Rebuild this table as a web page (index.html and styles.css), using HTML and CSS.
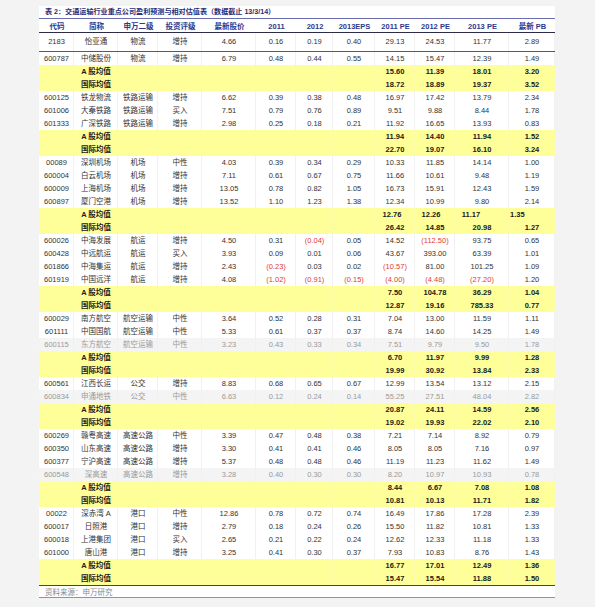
FILE: index.html
```html
<!DOCTYPE html>
<html lang="zh-CN">
<head>
<meta charset="utf-8">
<title>交通运输行业重点公司盈利预测与相对估值表</title>
<link rel="stylesheet" href="styles.css">
</head>
<body>
<div class="panel">
  <div class="title">表 2：交通运输行业重点公司盈利预测与相对估值表（数据截止 13/3/14）</div>
  <div class="grid head">
    <span>代码</span><span>简称</span><span>申万二级</span><span>投资评级</span><span>最新股价</span><span>2011</span><span>2012</span><span>2013EPS</span><span>2011 PE</span><span>2012 PE</span><span>2013 PE</span><span>最新 PB</span>
  </div>
  <div class="grid row first">
    <span>2183</span><span>怡亚通</span><span>物流</span><span>增持</span><span>4.66</span><span>0.16</span><span>0.19</span><span>0.40</span><span>29.13</span><span>24.53</span><span>11.77</span><span>2.89</span>
  </div>
  <div class="body">
    <div class="grid row"><span>600787</span><span>中储股份</span><span>物流</span><span>增持</span><span>6.79</span><span>0.48</span><span>0.44</span><span>0.55</span><span>14.15</span><span>15.47</span><span>12.39</span><span>1.49</span></div>
    <div class="grid avg"><span></span><span>A 股均值</span><span></span><span></span><span></span><span></span><span></span><span></span><span>15.60</span><span>11.39</span><span>18.01</span><span>3.20</span></div>
    <div class="grid avg"><span></span><span>国际均值</span><span></span><span></span><span></span><span></span><span></span><span></span><span>18.72</span><span>18.89</span><span>19.37</span><span>3.52</span></div>

    <div class="grid row"><span>600125</span><span>铁龙物流</span><span>铁路运输</span><span>增持</span><span>6.62</span><span>0.39</span><span>0.38</span><span>0.48</span><span>16.97</span><span>17.42</span><span>13.79</span><span>2.34</span></div>
    <div class="grid row"><span>601006</span><span>大秦铁路</span><span>铁路运输</span><span>买入</span><span>7.51</span><span>0.79</span><span>0.76</span><span>0.89</span><span>9.51</span><span>9.88</span><span>8.44</span><span>1.78</span></div>
    <div class="grid row"><span>601333</span><span>广深铁路</span><span>铁路运输</span><span>增持</span><span>2.98</span><span>0.25</span><span>0.18</span><span>0.21</span><span>11.92</span><span>16.65</span><span>13.93</span><span>0.83</span></div>
    <div class="grid avg"><span></span><span>A 股均值</span><span></span><span></span><span></span><span></span><span></span><span></span><span>11.94</span><span>14.40</span><span>11.94</span><span>1.52</span></div>
    <div class="grid avg"><span></span><span>国际均值</span><span></span><span></span><span></span><span></span><span></span><span></span><span>22.70</span><span>19.07</span><span>16.10</span><span>3.24</span></div>

    <div class="grid row"><span>00089</span><span>深圳机场</span><span>机场</span><span>中性</span><span>4.03</span><span>0.39</span><span>0.34</span><span>0.29</span><span>10.33</span><span>11.85</span><span>14.14</span><span>1.00</span></div>
    <div class="grid row"><span>600004</span><span>白云机场</span><span>机场</span><span>增持</span><span>7.11</span><span>0.61</span><span>0.67</span><span>0.75</span><span>11.66</span><span>10.61</span><span>9.48</span><span>1.19</span></div>
    <div class="grid row"><span>600009</span><span>上海机场</span><span>机场</span><span>增持</span><span>13.05</span><span>0.78</span><span>0.82</span><span>1.05</span><span>16.73</span><span>15.91</span><span>12.43</span><span>1.59</span></div>
    <div class="grid row"><span>600897</span><span>厦门空港</span><span>机场</span><span>增持</span><span>13.52</span><span>1.10</span><span>1.23</span><span>1.38</span><span>12.34</span><span>10.99</span><span>9.80</span><span>2.14</span></div>
    <div class="grid avg shifted"><span></span><span>A 股均值</span><span></span><span></span><span></span><span></span><span></span><span></span><span>12.76</span><span>12.26</span><span>11.17</span><span>1.35</span></div>
    <div class="grid avg"><span></span><span>国际均值</span><span></span><span></span><span></span><span></span><span></span><span></span><span>26.42</span><span>14.85</span><span>20.98</span><span>1.27</span></div>

    <div class="grid row"><span>600026</span><span>中海发展</span><span>航运</span><span>增持</span><span>4.50</span><span>0.31</span><span class="neg">(0.04)</span><span>0.05</span><span>14.52</span><span class="neg">(112.50)</span><span>93.75</span><span>0.65</span></div>
    <div class="grid row"><span>600428</span><span>中远航运</span><span>航运</span><span>买入</span><span>3.93</span><span>0.09</span><span>0.01</span><span>0.06</span><span>43.67</span><span>393.00</span><span>63.39</span><span>1.01</span></div>
    <div class="grid row"><span>601866</span><span>中海集运</span><span>航运</span><span>增持</span><span>2.43</span><span class="neg">(0.23)</span><span>0.03</span><span>0.02</span><span class="neg">(10.57)</span><span>81.00</span><span>101.25</span><span>1.09</span></div>
    <div class="grid row"><span>601919</span><span>中国远洋</span><span>航运</span><span>增持</span><span>4.08</span><span class="neg">(1.02)</span><span class="neg">(0.91)</span><span class="neg">(0.15)</span><span class="neg">(4.00)</span><span class="neg">(4.48)</span><span class="neg">(27.20)</span><span>1.20</span></div>
    <div class="grid avg"><span></span><span>A 股均值</span><span></span><span></span><span></span><span></span><span></span><span></span><span>7.50</span><span>104.78</span><span>36.29</span><span>1.04</span></div>
    <div class="grid avg"><span></span><span>国际均值</span><span></span><span></span><span></span><span></span><span></span><span></span><span>12.87</span><span>19.16</span><span>785.33</span><span>0.77</span></div>

    <div class="grid row"><span>600029</span><span>南方航空</span><span>航空运输</span><span>中性</span><span>3.64</span><span>0.52</span><span>0.28</span><span>0.31</span><span>7.04</span><span>13.00</span><span>11.59</span><span>1.11</span></div>
    <div class="grid row"><span>601111</span><span>中国国航</span><span>航空运输</span><span>中性</span><span>5.33</span><span>0.61</span><span>0.37</span><span>0.37</span><span>8.74</span><span>14.60</span><span>14.25</span><span>1.49</span></div>
    <div class="grid row dim"><span>600115</span><span>东方航空</span><span>航空运输</span><span>中性</span><span>3.23</span><span>0.43</span><span>0.33</span><span>0.34</span><span>7.51</span><span>9.79</span><span>9.50</span><span>1.78</span></div>
    <div class="grid avg"><span></span><span>A 股均值</span><span></span><span></span><span></span><span></span><span></span><span></span><span>6.70</span><span>11.97</span><span>9.99</span><span>1.28</span></div>
    <div class="grid avg"><span></span><span>国际均值</span><span></span><span></span><span></span><span></span><span></span><span></span><span>19.99</span><span>30.92</span><span>13.84</span><span>2.33</span></div>

    <div class="grid row"><span>600561</span><span>江西长运</span><span>公交</span><span>增持</span><span>8.83</span><span>0.68</span><span>0.65</span><span>0.67</span><span>12.99</span><span>13.54</span><span>13.12</span><span>2.15</span></div>
    <div class="grid row dim"><span>600834</span><span>申通地铁</span><span>公交</span><span>中性</span><span>6.63</span><span>0.12</span><span>0.24</span><span>0.14</span><span>55.25</span><span>27.51</span><span>48.04</span><span>2.82</span></div>
    <div class="grid avg"><span></span><span>A 股均值</span><span></span><span></span><span></span><span></span><span></span><span></span><span>20.87</span><span>24.11</span><span>14.59</span><span>2.56</span></div>
    <div class="grid avg"><span></span><span>国际均值</span><span></span><span></span><span></span><span></span><span></span><span></span><span>19.02</span><span>19.93</span><span>22.02</span><span>2.10</span></div>

    <div class="grid row"><span>600269</span><span>赣粤高速</span><span>高速公路</span><span>中性</span><span>3.39</span><span>0.47</span><span>0.48</span><span>0.38</span><span>7.21</span><span>7.14</span><span>8.92</span><span>0.79</span></div>
    <div class="grid row"><span>600350</span><span>山东高速</span><span>高速公路</span><span>增持</span><span>3.30</span><span>0.41</span><span>0.41</span><span>0.46</span><span>8.05</span><span>8.05</span><span>7.16</span><span>0.97</span></div>
    <div class="grid row"><span>600377</span><span>宁沪高速</span><span>高速公路</span><span>增持</span><span>5.37</span><span>0.48</span><span>0.48</span><span>0.46</span><span>11.19</span><span>11.23</span><span>11.62</span><span>1.49</span></div>
    <div class="grid row dim"><span>600548</span><span>深高速</span><span>高速公路</span><span>增持</span><span>3.28</span><span>0.40</span><span>0.30</span><span>0.30</span><span>8.20</span><span>10.97</span><span>10.93</span><span>0.78</span></div>
    <div class="grid avg"><span></span><span>A 股均值</span><span></span><span></span><span></span><span></span><span></span><span></span><span>8.44</span><span>6.67</span><span>7.08</span><span>1.08</span></div>
    <div class="grid avg"><span></span><span>国际均值</span><span></span><span></span><span></span><span></span><span></span><span></span><span>10.81</span><span>10.13</span><span>11.71</span><span>1.82</span></div>

    <div class="grid row"><span>00022</span><span>深赤湾 A</span><span>港口</span><span>中性</span><span>12.86</span><span>0.78</span><span>0.72</span><span>0.74</span><span>16.49</span><span>17.86</span><span>17.28</span><span>2.39</span></div>
    <div class="grid row"><span>600017</span><span>日照港</span><span>港口</span><span>增持</span><span>2.79</span><span>0.18</span><span>0.24</span><span>0.26</span><span>15.50</span><span>11.82</span><span>10.81</span><span>1.33</span></div>
    <div class="grid row"><span>600018</span><span>上港集团</span><span>港口</span><span>买入</span><span>2.65</span><span>0.21</span><span>0.22</span><span>0.24</span><span>12.62</span><span>12.33</span><span>11.18</span><span>1.33</span></div>
    <div class="grid row"><span>601000</span><span>唐山港</span><span>港口</span><span>增持</span><span>3.25</span><span>0.41</span><span>0.30</span><span>0.37</span><span>7.93</span><span>10.83</span><span>8.76</span><span>1.43</span></div>
    <div class="grid avg"><span></span><span>A 股均值</span><span></span><span></span><span></span><span></span><span></span><span></span><span>16.77</span><span>17.01</span><span>12.49</span><span>1.36</span></div>
    <div class="grid avg"><span></span><span>国际均值</span><span></span><span></span><span></span><span></span><span></span><span></span><span>15.47</span><span>15.54</span><span>11.88</span><span>1.50</span></div>
  </div>
  <div class="source">资料来源：申万研究</div>
</div>
</body>
</html>
```

FILE: styles.css
```css
html, body {
  margin: 0;
  padding: 0;
  background: #f3f3f3;
}

body {
  padding-top: 6px;
  font-family: "Liberation Sans", "Noto Sans CJK SC", sans-serif;
  font-size: 7.5px;
  color: #333;
}

.panel {
  margin-left: 39px;
  width: 516px;
  background: #ffffff;
}

.title {
  height: 12px;
  line-height: 13px;
  padding-left: 6px;
  font-size: 7.1px;
  font-weight: bold;
  color: #1f2c78;
  border-bottom: 1px solid #6a6eb0;
  white-space: nowrap;
}

.grid {
  display: grid;
  grid-template-columns: 35px 44px 40px 44px 54px 40px 37px 42px 40px 40px 54px 46px;
}

.grid > span {
  text-align: center;
  white-space: nowrap;
  border-right: 1px solid #f1f1f1;
  padding-left: 1px;
}

.head {
  height: 13px;
  border-bottom: 1px solid #2c2c48;
}

.head > span {
  line-height: 15px;
  font-weight: bold;
  color: #2b3890;
  border-right: none;
}

.row {
  height: 13px;
}

.row > span {
  line-height: 13px;
}

.first {
  height: 18px;
  border-bottom: 1px solid #5a5a5a;
}

.first > span {
  line-height: 17px;
}

.avg {
  height: 13px;
  background: #ffff99;
}

.avg > span {
  line-height: 13px;
  font-weight: bold;
  color: #1a1a1a;
  border-right-color: #fbfba8;
}

.shifted > span:nth-child(9) {
  padding-right: 6px;
}

.shifted > span:nth-child(10) {
  padding-right: 8px;
}

.shifted > span:nth-child(11) {
  padding-right: 22px;
}

.shifted > span:nth-child(12) {
  padding-right: 34px;
}

.dim {
  background: #f4f4f4;
}

.dim > span {
  color: #9a9a9a;
}

.neg {
  color: #e23b34;
}

.body {
  border-bottom: 1px solid #3d4080;
}

.source {
  height: 11px;
  line-height: 13px;
  padding-left: 6px;
  color: #8a8a8a;
  border-bottom: 1px solid #8c8fbc;
}
```
